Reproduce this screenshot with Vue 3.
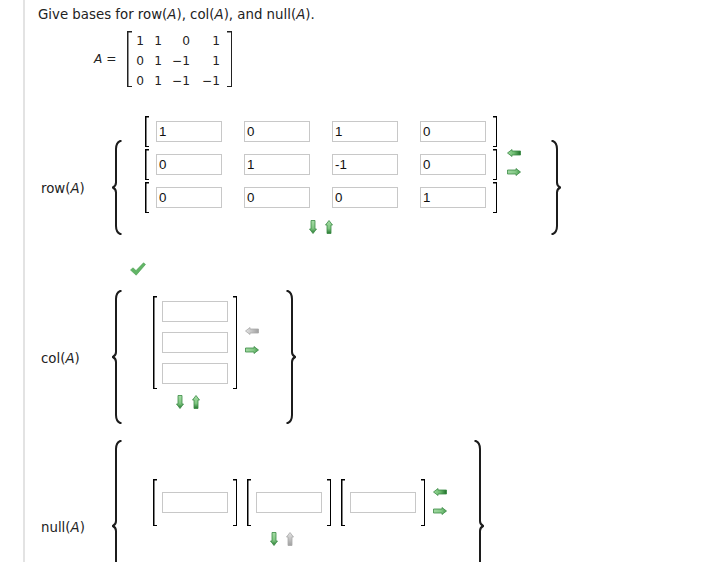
<script setup>
const arrowPoints = {
  left: '0.5,4 5,0.5 5,2 13.5,2 13.5,6 5,6 5,7.5',
  right: '0.5,2 9,2 9,0.5 13.5,4 9,7.5 9,6 0.5,6',
  up: '4,0.5 7.5,5 6,5 6,13.5 2,13.5 2,5 0.5,5',
  down: '2,0.5 6,0.5 6,9 7.5,9 4,13.5 0.5,9 2,9'
}
const arrowFill = (dir, off) => {
  if (dir === 'right' && !off) return 'url(#greenR)'
  const axis = dir === 'left' || dir === 'right' ? 'H' : 'V'
  return `url(#${off ? 'gray' : 'green'}${axis})`
}
const arrowStroke = (off) => (off ? '#a8a8a8' : '#3a8a44')
const arrowBox = (dir) => (dir === 'left' || dir === 'right' ? '0 0 14 8' : '0 0 8 14')

const bracePath = (h) => {
  const c = h / 2
  return `M9.5 .5 Q4 2 4 9 V${c - 5} Q4 ${c - 1.5} .8 ${c} Q4 ${c + 1.5} 4 ${c + 5} V${h - 9} Q4 ${h - 2} 9.5 ${h - 0.5}`
}

const matrixA = [
  ['1', '1', '0', '1'],
  ['0', '1', '\u22121', '1'],
  ['0', '1', '\u22121', '\u22121']
]
const rowRows = [
  ['1', '0', '1', '0'],
  ['0', '1', '-1', '0'],
  ['0', '0', '0', '1']
]
</script>

<template>
  <div class="page">
    <svg class="defs" width="0" height="0" aria-hidden="true">
      <defs>
        <linearGradient id="greenH" x1="0" y1="0" x2="1" y2="0">
          <stop offset="0" stop-color="#9bd89b" />
          <stop offset="0.5" stop-color="#6dbb6f" />
          <stop offset="1" stop-color="#1f6f2a" />
        </linearGradient>
        <linearGradient id="greenR" x1="0" y1="0" x2="1" y2="0">
          <stop offset="0" stop-color="#a2d8a2" />
          <stop offset="0.6" stop-color="#84c986" />
          <stop offset="1" stop-color="#45994c" />
        </linearGradient>
        <linearGradient id="greenV" x1="0" y1="0" x2="0" y2="1">
          <stop offset="0" stop-color="#a5dca5" />
          <stop offset="0.6" stop-color="#7fc681" />
          <stop offset="1" stop-color="#24752f" />
        </linearGradient>
        <linearGradient id="grayH" x1="0" y1="0" x2="1" y2="0">
          <stop offset="0" stop-color="#e4e4e4" />
          <stop offset="1" stop-color="#a0a0a0" />
        </linearGradient>
        <linearGradient id="grayV" x1="0" y1="0" x2="0" y2="1">
          <stop offset="0" stop-color="#e4e4e4" />
          <stop offset="1" stop-color="#a0a0a0" />
        </linearGradient>
      </defs>
    </svg>

    <p class="title">Give bases for row(<i>A</i>), col(<i>A</i>), and null(<i>A</i>).</p>

    <div class="equation">
      <span class="eq-label"><i>A</i> =</span>
      <div class="a-matrix">
        <template v-for="(row, r) in matrixA" :key="r">
          <span v-for="(cell, c) in row" :key="c" class="a-cell">{{ cell }}</span>
        </template>
      </div>
    </div>

    <!-- row(A) -->
    <section class="set set-row">
      <span class="set-label">row(<i>A</i>)</span>
      <svg class="brace" width="10" height="95" viewBox="0 0 10 95"><path :d="bracePath(95)" /></svg>
      <div class="body body-row">
        <div class="col-left">
          <div class="row-stack">
            <div v-for="(row, r) in rowRows" :key="r" class="mat mat-row">
              <input v-for="(v, c) in row" :key="c" class="cell" :value="v" readonly />
            </div>
          </div>
          <div class="moves">
            <svg class="ar-v" :viewBox="arrowBox('down')"><polygon :points="arrowPoints.down" :fill="arrowFill('down')" :stroke="arrowStroke()" stroke-width=".8" /></svg>
            <svg class="ar-v" :viewBox="arrowBox('up')"><polygon :points="arrowPoints.up" :fill="arrowFill('up')" :stroke="arrowStroke()" stroke-width=".8" /></svg>
          </div>
        </div>
        <div class="side side-row">
          <svg class="ar-h" :viewBox="arrowBox('left')"><polygon :points="arrowPoints.left" :fill="arrowFill('left')" :stroke="arrowStroke()" stroke-width=".8" /></svg>
          <svg class="ar-h" :viewBox="arrowBox('right')"><polygon :points="arrowPoints.right" :fill="arrowFill('right')" :stroke="arrowStroke()" stroke-width=".8" /></svg>
        </div>
      </div>
      <svg class="brace brace-r" width="10" height="95" viewBox="0 0 10 95"><path :d="bracePath(95)" /></svg>
    </section>

    <svg class="check" width="16" height="14" viewBox="0 0 16 14">
      <path d="M0.5 8 L3 5.8 L6 8.6 L13.5 0.8 L15.5 2.4 L6.2 13.2 Z" fill="#62b566" stroke="#4f9f55" stroke-width=".6" />
    </svg>

    <!-- col(A) -->
    <section class="set set-col">
      <span class="set-label">col(<i>A</i>)</span>
      <svg class="brace" width="10" height="134" viewBox="0 0 10 134"><path :d="bracePath(134)" /></svg>
      <div class="body body-col">
        <div class="col-left">
          <div class="mat mat-col">
            <input class="cell" readonly />
            <input class="cell" readonly />
            <input class="cell" readonly />
          </div>
          <div class="moves moves-off">
            <svg class="ar-v" :viewBox="arrowBox('down')"><polygon :points="arrowPoints.down" :fill="arrowFill('down')" :stroke="arrowStroke()" stroke-width=".8" /></svg>
            <svg class="ar-v" :viewBox="arrowBox('up')"><polygon :points="arrowPoints.up" :fill="arrowFill('up')" :stroke="arrowStroke()" stroke-width=".8" /></svg>
          </div>
        </div>
        <div class="side side-col">
          <svg class="ar-h" :viewBox="arrowBox('left')"><polygon :points="arrowPoints.left" :fill="arrowFill('left', true)" :stroke="arrowStroke(true)" stroke-width=".8" /></svg>
          <svg class="ar-h" :viewBox="arrowBox('right')"><polygon :points="arrowPoints.right" :fill="arrowFill('right')" :stroke="arrowStroke()" stroke-width=".8" /></svg>
        </div>
      </div>
      <svg class="brace brace-r" width="10" height="134" viewBox="0 0 10 134"><path :d="bracePath(134)" /></svg>
    </section>

    <!-- null(A) -->
    <section class="set set-null">
      <span class="set-label">null(<i>A</i>)</span>
      <svg class="brace" width="10" height="172" viewBox="0 0 10 172"><path :d="bracePath(172)" /></svg>
      <div class="body body-null">
        <div class="col-left">
          <div class="null-row">
            <div class="mat mat-null"><input class="cell" readonly /></div>
            <div class="mat mat-null"><input class="cell" readonly /></div>
            <div class="mat mat-null"><input class="cell" readonly /></div>
          </div>
          <div class="moves moves-off">
            <svg class="ar-v" :viewBox="arrowBox('down')"><polygon :points="arrowPoints.down" :fill="arrowFill('down')" :stroke="arrowStroke()" stroke-width=".8" /></svg>
            <svg class="ar-v" :viewBox="arrowBox('up')"><polygon :points="arrowPoints.up" :fill="arrowFill('up', true)" :stroke="arrowStroke(true)" stroke-width=".8" /></svg>
          </div>
        </div>
        <div class="side side-null">
          <svg class="ar-h" :viewBox="arrowBox('left')"><polygon :points="arrowPoints.left" :fill="arrowFill('left')" :stroke="arrowStroke()" stroke-width=".8" /></svg>
          <svg class="ar-h" :viewBox="arrowBox('right')"><polygon :points="arrowPoints.right" :fill="arrowFill('right')" :stroke="arrowStroke()" stroke-width=".8" /></svg>
        </div>
      </div>
      <svg class="brace brace-r" width="10" height="172" viewBox="0 0 10 172"><path :d="bracePath(172)" /></svg>
    </section>
  </div>
</template>

<style scoped>
.page {
  height: 562px;
  overflow: hidden;
  box-sizing: border-box;
  margin-left: 23px;
  padding-left: 13px;
  border-left: 2px solid #e3e3e3;
  font-family: "DejaVu Sans", Verdana, sans-serif;
  font-size: 13.33px;
  color: #222;
  background: #fff;
}
.defs {
  position: absolute;
}
.title {
  margin: 0;
  padding: 6px 0 0;
  line-height: 17px;
  font-size: 13.33px;
}
.equation {
  display: flex;
  align-items: center;
  margin: 8px 0 0 56px;
  height: 56px;
}
.eq-label {
  font-size: 12.2px;
  width: 33px;
}
.a-matrix {
  display: grid;
  grid-template-columns: 8px 18px 28px 30px;
  grid-auto-rows: 20px;
  align-items: center;
  box-sizing: border-box;
  width: 105px;
  height: 56px;
  padding-left: 9px;
  background:
    linear-gradient(#222, #222) 0 0 / 5px 1.5px no-repeat,
    linear-gradient(#222, #222) 0 100% / 5px 1.5px no-repeat,
    linear-gradient(#222, #222) 0 0 / 1.5px 100% no-repeat,
    linear-gradient(#222, #222) 100% 0 / 5px 1.5px no-repeat,
    linear-gradient(#222, #222) 100% 100% / 5px 1.5px no-repeat,
    linear-gradient(#222, #222) 100% 0 / 1.5px 100% no-repeat;
}
.a-cell {
  font-size: 12.2px;
  line-height: 20px;
  text-align: right;
  white-space: nowrap;
}
.set {
  display: flex;
  align-items: center;
}
.set-label {
  box-sizing: border-box;
  width: 74px;
  padding: 2px 0 0 3px;
  font-size: 13.33px;
}
.brace {
  flex: none;
  display: block;
}
.brace path {
  fill: none;
  stroke: #1c1c1c;
  stroke-width: 2;
}
.brace-r {
  transform: scaleX(-1);
}
.set-row {
  height: 142px;
  margin-top: 29px;
}
.set-col {
  height: 134px;
  margin-top: 14px;
}
.set-null {
  height: 172px;
  margin-top: 16px;
}
.body {
  display: flex;
  align-self: flex-start;
}
.body-row {
  margin-left: 23px;
  margin-right: 30px;
}
.body-col {
  margin-top: 6px;
  margin-left: 31px;
  margin-right: 27px;
}
.body-null {
  margin-top: 39px;
  margin-left: 31px;
  margin-right: 27px;
}
.col-left {
  display: flex;
  flex-direction: column;
}
.row-stack {
  display: flex;
  flex-direction: column;
  gap: 2px;
}
.mat {
  box-sizing: border-box;
  background:
    linear-gradient(#000, #000) 0 0 / 4px 1.5px no-repeat,
    linear-gradient(#000, #000) 0 100% / 4px 1.5px no-repeat,
    linear-gradient(#000, #000) 0 0 / 1.5px 100% no-repeat,
    linear-gradient(#000, #000) 100% 0 / 4px 1.5px no-repeat,
    linear-gradient(#000, #000) 100% 100% / 4px 1.5px no-repeat,
    linear-gradient(#000, #000) 100% 0 / 1.5px 100% no-repeat;
}
.mat-row {
  display: flex;
  align-items: center;
  gap: 22px;
  height: 31px;
  padding: 0 11px;
}
.mat-col {
  display: flex;
  flex-direction: column;
  gap: 10px;
  padding: 5px 9px;
}
.null-row {
  display: flex;
  gap: 10px;
}
.mat-null {
  display: flex;
  align-items: center;
  height: 47px;
  padding: 0 9px;
}
.cell {
  display: block;
  box-sizing: border-box;
  width: 66px;
  height: 21px;
  margin: 0;
  padding: 0 2px;
  border: 1px solid #c8c8c8;
  border-radius: 0;
  outline: none;
  background: #fff;
  color: #111;
  font-family: "Liberation Sans", Arial, sans-serif;
  font-size: 13.33px;
}
.moves {
  display: flex;
  justify-content: center;
  gap: 8px;
  margin-top: 7px;
}
.moves-off {
  margin-top: 6px;
  padding-right: 14px;
}
.ar-v {
  display: block;
  width: 8px;
  height: 14px;
}
.ar-h {
  display: block;
  width: 14px;
  height: 8px;
}
.side {
  display: flex;
  flex-direction: column;
  gap: 11px;
  align-self: flex-start;
}
.side-row {
  margin-left: 10px;
  margin-top: 33px;
}
.side-col {
  margin-left: 8px;
  margin-top: 31px;
}
.side-null {
  margin-left: 8px;
  margin-top: 9px;
}
.check {
  display: block;
  margin: 4px 0 0 92px;
}
</style>

<style>
html, body {
  margin: 0;
  overflow: hidden;
  background: #fff;
}
</style>
